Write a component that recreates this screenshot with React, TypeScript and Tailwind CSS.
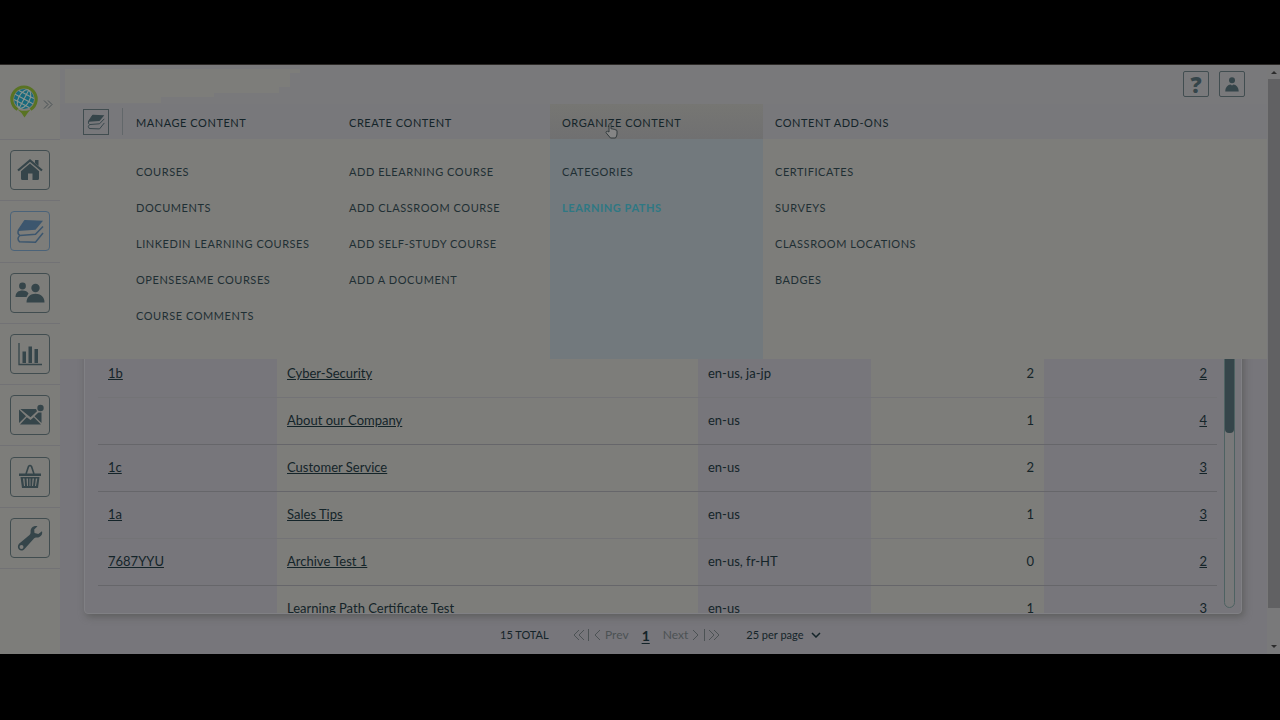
import type { ReactNode } from "react";
import clsx from "clsx";

type MenuColumn = {
  title: string;
  items: string[];
};

type PathRow = {
  code: string;
  name: string;
  languages: string;
  courses: number;
  enrolled: number;
  divided?: boolean;
};

const menuColumns: MenuColumn[] = [
  {
    title: "Manage Content",
    items: ["Courses", "Documents", "LinkedIn Learning Courses", "OpenSesame Courses", "Course Comments"],
  },
  {
    title: "Create Content",
    items: ["Add eLearning Course", "Add Classroom Course", "Add Self-Study Course", "Add a Document"],
  },
  { title: "Organize Content", items: ["Categories", "Learning Paths"] },
  { title: "Content Add-ons", items: ["Certificates", "Surveys", "Classroom Locations", "Badges"] },
];

const rows: PathRow[] = [
  { code: "1b", name: "Cyber-Security", languages: "en-us, ja-jp", courses: 2, enrolled: 2 },
  { code: "", name: "About our Company", languages: "en-us", courses: 1, enrolled: 4, divided: true },
  { code: "1c", name: "Customer Service", languages: "en-us", courses: 2, enrolled: 3, divided: true },
  { code: "1a", name: "Sales Tips", languages: "en-us", courses: 1, enrolled: 3 },
  { code: "7687YYU", name: "Archive Test 1", languages: "en-us, fr-HT", courses: 0, enrolled: 2, divided: true },
  { code: "", name: "Learning Path Certificate Test", languages: "en-us", courses: 1, enrolled: 3 },
];

function BooksIcon({ className }: { className?: string }) {
  return (
    <svg viewBox="0 0 28 25" className={className} fill="none" stroke="currentColor" strokeWidth="1.500">
      <path d="M9 1 27 1.800 19.500 10.800 2 12Z" fill="currentColor" stroke="none" />
      <path d="M9 1.500 2.500 11Q1 15 4 16.500L19.500 15.300 27 7.500" />
      <path d="M3.500 17Q.5 19.500 3.500 22.700L19.500 23.300 27 14" />
    </svg>
  );
}

function HomeIcon() {
  return (
    <svg viewBox="0 0 26 22" className="h-[22px] w-[26px]" fill="currentColor">
      <path d="M13 4.500 22 12.200V19.500Q22 21 20.500 21H15.500V14.500H11V21H5.500Q4 21 4 19.500V12.200Z" />
      <path d="M1 11.500 13 1.500 25 11.500" fill="none" stroke="currentColor" strokeWidth="2.200" />
      <path d="M18 1H21.500V7L18 4Z" />
    </svg>
  );
}

function PeopleIcon() {
  return (
    <svg viewBox="0 0 30 22" className="h-[22px] w-[30px]" fill="currentColor">
      <circle cx="7.500" cy="4" r="3.400" />
      <path d="M.5 15C.5 10.500 3.500 8.500 7.500 8.500 10.500 8.500 12.500 9.500 13.500 11.500L11.500 15Z" />
      <circle cx="20.500" cy="6" r="4.200" />
      <path d="M11.500 20.500C11.500 14.500 15.500 11.700 20.500 11.700S29.500 14.500 29.500 20.500Z" />
    </svg>
  );
}

function ChartIcon() {
  return (
    <svg viewBox="0 0 26 24" className="h-6 w-[26px]" fill="currentColor">
      <path d="M2 1V22.500H25" fill="none" stroke="currentColor" strokeWidth="1.300" />
      <path d="M5.500 9.500h3.500V21H5.500ZM11.500 4.500H15V21H11.500ZM17.500 7H21V21H17.500Z" />
    </svg>
  );
}

function MailIcon() {
  return (
    <svg viewBox="0 0 28 22" className="h-[22px] w-7" fill="currentColor">
      <path d="M3 5.500 10 12.200 3 19ZM4.300 5H20L21 7.300 14.500 13.300ZM25.500 8.500V19L18.500 12.300 22.500 8.500ZM10.800 13.200 14.500 16 17.800 13.200 25 20.500H4Z" />
      <circle cx="24.500" cy="4" r="3.200" />
    </svg>
  );
}

function BasketIcon() {
  return (
    <svg viewBox="0 0 26 26" className="h-[26px] w-[26px]" fill="currentColor">
      <path d="M9 10 11.500 2.500Q13 .5 14.500 2.500L17 10" fill="none" stroke="currentColor" strokeWidth="1.600" />
      <path d="M2 9.500H24V12H2Z" />
      <path d="M3.500 13H22.500L21 24H5ZM6 14.500 7 22H8L7.500 14.500ZM9.500 14.500 10 22H11V14.500ZM12.500 14.500V22H13.500V14.500ZM15.500 14.500 15 22H16L17 14.500ZM18.800 14.500 18 22H19L20.300 14.500Z" fillRule="evenodd" />
    </svg>
  );
}

function WrenchIcon() {
  return (
    <svg viewBox="0 0 26 26" className="h-[26px] w-[26px]" fill="currentColor">
      <path
        fillRule="evenodd"
        d="M20.500 1.300C17 .3 13.500 2.500 13.600 6.500 13.700 8 13.500 9 12.500 10L2 18.800C.5 20.500.5 23 2 24.500 3.500 26 6 25.800 7.300 24.200L16.500 14C17.500 13 18.500 12.700 20 12.600 23.500 12.500 26 9.500 25 6.300L21.300 9 17.500 8 17.200 4.600ZM4.500 20A2 2 0 1 1 4.500 24 2 2 0 0 1 4.500 20Z"
      />
    </svg>
  );
}

function LogoIcon() {
  return (
    <svg viewBox="0 0 28 34" className="h-[34px] w-7">
      <path d="M7.500 24.500A12.200 12.200 0 1 1 20.500 24.500" fill="none" stroke="#597323" strokeWidth="3" />
      <path d="M6 23C9 25.500 11 25.800 14 25.800S19 25.500 21 24L18 27.500 14.500 32.500 11.500 28Z" fill="#597323" />
      <circle cx="14" cy="14" r="10" fill="#17697d" />
      <g fill="none" stroke="#8a958f" strokeWidth="1.100" transform="rotate(28 14 14)">
        <path d="M14 4V24M4 14H24M5.500 9H22.500M5.500 19H22.500" />
        <ellipse cx="14" cy="14" rx="5.500" ry="10" />
      </g>
    </svg>
  );
}

function UserIcon() {
  return (
    <svg viewBox="0 0 14 15" className="h-[15px] w-3.5" fill="currentColor">
      <circle cx="7" cy="3.200" r="3" />
      <path d="M.3 14.500C.3 10 3 7.800 5.500 7.500L7 8.500 8.500 7.500C11 7.800 13.700 10 13.700 14.500Z" />
    </svg>
  );
}

function HandCursor() {
  return (
    <svg viewBox="0 0 13 17" className="h-[17px] w-[13px]">
      <path
        d="M4 10V2.300Q5 .5 6 2.300V7Q7 6 8 7.300 9.200 6.500 10 7.800 11.700 7.300 12 9V12Q12 14 10.500 16H5.500L1 10.700Q1 9 2.500 9.300Z"
        fill="#858585"
        stroke="#333b3d"
      />
    </svg>
  );
}

const navItems: { label: string; icon: ReactNode; active?: boolean }[] = [
  { label: "Home", icon: <HomeIcon /> },
  { label: "Content", icon: <BooksIcon className="h-[25px] w-7" />, active: true },
  { label: "Users", icon: <PeopleIcon /> },
  { label: "Reports", icon: <ChartIcon /> },
  { label: "Messages", icon: <MailIcon /> },
  { label: "Store", icon: <BasketIcon /> },
  { label: "Settings", icon: <WrenchIcon /> },
];

function Sidebar() {
  return (
    <aside className="w-[60px] shrink-0 bg-[#7d7d7a]">
      <div className="flex h-[74px] items-center gap-[5px] pl-2.5 text-[#4a5254]">
        <LogoIcon />
        <button aria-label="Expand sidebar" className="pt-1">
          <svg viewBox="0 0 10 9" className="h-[9px] w-2.5" fill="none" stroke="currentColor">
            <path d="M1 .5 5 4.500 1 8.500M5 .5 9 4.500 5 8.500" />
          </svg>
        </button>
      </div>
      <nav className="grid h-[430px] grid-rows-7 border-b border-[#727275]">
        {navItems.map((item) => (
          <div key={item.label} className="flex items-center justify-center border-t border-[#727275]">
            <button
              aria-label={item.label}
              className={clsx(
                "flex size-10 items-center justify-center rounded border",
                item.active ? "border-[#4b6379] text-[#3c566e]" : "border-[#414d50] text-[#35454a]"
              )}
            >
              {item.icon}
            </button>
          </div>
        ))}
      </nav>
    </aside>
  );
}

function MegaMenu() {
  return (
    <nav className="absolute inset-x-0 top-[39px] z-10 flex h-[255px] text-[11px] tracking-wider text-[#1f2f34] uppercase">
      <div className="w-16 shrink-0">
        <div className="flex h-[35px] items-center justify-end gap-[13px] bg-[#78787b] pr-px">
          <button aria-label="Content" className="flex size-[26px] items-center justify-center border border-[#414d50] text-[#35454a]">
            <BooksIcon className="h-4 w-[18px]" />
          </button>
          <span className="h-[27px] w-px bg-[#62676a]" />
        </div>
        <div className="h-[220px] bg-[#7d7d7a]" />
      </div>
      {menuColumns.map((column, index) => (
        <div key={column.title} className="w-[213px] shrink-0">
          <h2
            className={clsx(
              "flex h-[35px] items-center px-3 pt-1 text-[#142429]",
              index === 2 ? "bg-linear-to-b from-[#767673] to-[#707071]" : "bg-[#78787b]"
            )}
          >
            {column.title}
          </h2>
          <ul className={clsx("h-[220px] pt-[15px]", index === 2 ? "bg-[#72797d]" : "bg-[#7d7d7a]")}>
            {column.items.map((item) => (
              <li key={item} className="flex h-9 items-center px-3 whitespace-nowrap">
                <a href="#" className={item === "Learning Paths" ? "font-bold text-[#2e7884]" : ""}>
                  {item}
                </a>
              </li>
            ))}
          </ul>
        </div>
      ))}
      <div className="flex-1">
        <div className="h-[35px] bg-[#78787b]" />
        <div className="h-[220px] bg-[#7d7d7a]" />
      </div>
    </nav>
  );
}

function LearningPathTable() {
  return (
    <table className="w-full table-fixed border-collapse text-left text-[13px]">
      <colgroup>
        <col className="w-[16%] bg-[#77767b]" />
        <col className="bg-[#7d7d7a]" />
        <col className="w-[173px] bg-[#77767b]" />
        <col className="w-[173px] bg-[#7d7d7a]" />
        <col className="w-[173px] bg-[#77767b]" />
      </colgroup>
      <tbody>
        {rows.map((row) => (
          <tr key={row.name} className={clsx("h-[47px] border-b", row.divided ? "border-[#66666a]" : "border-[#737376]")}>
            <td className="px-2.5">
              <a href="#" className="underline">{row.code}</a>
            </td>
            <td className="px-2.5">
              <a href="#" className="underline">{row.name}</a>
            </td>
            <td className="px-2.5">{row.languages}</td>
            <td className="px-2.5 text-right">{row.courses}</td>
            <td className="px-2.5 text-right">
              <a href="#" className="underline">{row.enrolled}</a>
            </td>
          </tr>
        ))}
      </tbody>
    </table>
  );
}

function Pagination() {
  return (
    <footer className="flex h-10 items-center pt-0.5 pl-[440px] text-[12px] text-[#4c5254]">
      <span className="w-[73px] text-[11px] text-[#142429]">15 TOTAL</span>
      <button aria-label="First and previous page" className="flex items-center gap-1">
        <svg viewBox="0 0 28 12" className="h-3 w-7" fill="none" stroke="currentColor">
          <path d="M6 1 1 6 6 11M11 1 6 6 11 11M15.500 0V12M27 1 22 6 27 11" />
        </svg>
        <span>Prev</span>
      </button>
      <a href="#" className="mx-[13px] text-[14px] font-bold text-[#142429] underline underline-offset-2">1</a>
      <button aria-label="Next and last page" className="flex items-center gap-1">
        <span>Next</span>
        <svg viewBox="0 0 28 12" className="h-3 w-7" fill="none" stroke="currentColor">
          <path d="M1 1 6 6 1 11M12.500 0V12M17 1 22 6 17 11M22 1 27 6 22 11" />
        </svg>
      </button>
      <label className="ml-[26px] flex items-center text-[11px] text-[#142429]">
        <select aria-label="Rows per page" className="w-[65px] appearance-none bg-transparent">
          <option>25 per page</option>
        </select>
        <svg viewBox="0 0 10 6" className="h-1.5 w-2.5" fill="none" stroke="currentColor" strokeWidth="1.500">
          <path d="M1 1 5 5 9 1" />
        </svg>
      </label>
    </footer>
  );
}

export default function App() {
  return (
    <div className="flex h-screen flex-col bg-black pt-16 pb-[66px] font-['Lato',sans-serif] text-[#142429]">
      <div className="flex min-h-0 flex-1 border-t border-[#2b2826]">
        <Sidebar />
        <main className="relative flex min-w-0 flex-1 flex-col bg-[#77767b]">
          <header className="flex h-[73px] shrink-0 items-start bg-[#79797b]">
            <div className="mt-1 ml-[5px] h-[34px] w-[235px] bg-[#7d7d7a] [clip-path:polygon(0_0,100%_0,100%_4px,225px_4px,225px_18px,214px_18px,214px_24px,149px_24px,149px_28px,96px_28px,96px_100%,0_100%)]" />
            <div className="mt-1.5 mr-[22px] ml-auto flex gap-2.5 text-[#35454a]">
              <button
                aria-label="Help"
                className="flex size-[26px] items-center justify-center rounded-xs border border-[#414d50] font-['Open_Sans',sans-serif] text-[22px] font-extrabold"
              >
                ?
              </button>
              <button aria-label="Account" className="flex size-[26px] items-center justify-center rounded-xs border border-[#414d50]">
                <UserIcon />
              </button>
            </div>
          </header>
          <MegaMenu />
          <span className="pointer-events-none absolute top-[57px] left-[545px] z-20">
            <HandCursor />
          </span>
          <section className="mr-[25px] ml-6 flex min-h-0 flex-1 gap-[7px] overflow-hidden rounded-sm border border-[#808084] bg-[#77767b] pt-[211px] pr-1.5 pl-[13px] shadow-[2px_3px_7px_#5f5f5f]">
            <div className="min-w-0 flex-1">
              <LearningPathTable />
            </div>
            <div className="mb-[5px] w-[11px] shrink-0 rounded-b-full border border-[#4e6262] bg-[#79797a]">
              <div className="h-[82px] rounded-b-sm bg-[#35454a]" />
            </div>
          </section>
          <Pagination />
        </main>
        <div className="flex w-[13px] shrink-0 flex-col items-center bg-[#79797a] py-1.5 text-[#2c2c2c]">
          <svg viewBox="0 0 6 3" className="h-[3px] w-1.5" fill="currentColor">
            <path d="M0 3 3 0 6 3Z" />
          </svg>
          <div className="mt-[5px] mb-[37px] w-3 flex-1 bg-[#616163]" />
          <svg viewBox="0 0 6 3" className="h-[3px] w-1.5" fill="currentColor">
            <path d="M0 0 3 3 6 0Z" />
          </svg>
        </div>
      </div>
    </div>
  );
}
